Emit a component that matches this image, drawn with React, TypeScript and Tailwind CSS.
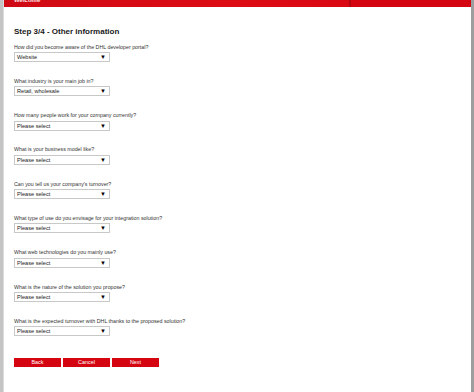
import React from "react";

const questions: { q: string; v: string }[] = [
  { q: "How did you become aware of the DHL developer portal?", v: "Website" },
  { q: "What industry is your main job in?", v: "Retail, wholesale" },
  { q: "How many people work for your company currently?", v: "Please select" },
  { q: "What is your business model like?", v: "Please select" },
  { q: "Can you tell us your company's turnover?", v: "Please select" },
  { q: "What type of use do you envisage for your integration solution?", v: "Please select" },
  { q: "What web technologies do you mainly use?", v: "Please select" },
  { q: "What is the nature of the solution you propose?", v: "Please select" },
  { q: "What is the expected turnover with DHL thanks to the proposed solution?", v: "Please select" },
];

export default function App() {
  return (
    <div
      className="w-[474px] h-[392px] overflow-hidden bg-white flex"
      style={{ fontFamily: '"Liberation Sans", Arial, sans-serif' }}
    >
      <div className="w-[4px] h-full bg-[#c4c4c4] border-r border-[#dadada]" />
      <div className="flex-1 flex flex-col">
        <div className="h-[7px] flex bg-gradient-to-r from-[#cf0a14] via-[#dd0b14] to-[#d40511]">
          <div className="w-[345px] h-full relative">
            <span className="absolute left-[10px] top-[-3px] text-[6px] leading-[7px] font-bold text-white/90">
              Welcome
            </span>
          </div>
          <div className="w-[2px] h-full bg-[#b3060e]" />
          <div className="flex-1 h-full bg-[#d40511]" />
        </div>
        <div className="pl-[10px] pt-[20px]">
          <div className="text-[8px] leading-[10px] font-bold text-[#1a1a1a] mb-[6.5px]">
            Step 3/4 - Other information
          </div>
          {questions.map((item, i) => (
            <div key={i} className="mb-[15.8px]">
              <div className="text-[5.3px] leading-[7px] text-[#333] mb-[1.5px]">{item.q}</div>
              <div className="w-[96px] h-[10px] border border-[#c8c8c8] bg-white flex items-center justify-between pl-[2px] pr-[3px]">
                <span className="text-[5.6px] leading-[8px] text-[#222]">{item.v}</span>
                <span className="text-[6px] leading-[8px] text-[#000]">▼</span>
              </div>
            </div>
          ))}
          <div className="flex gap-[2px] mt-[22px]">
            {["Back", "Cancel", "Next"].map((b) => (
              <div
                key={b}
                className="w-[47px] h-[9px] bg-[#d40511] text-white text-[5.4px] leading-[9px] text-center"
              >
                {b}
              </div>
            ))}
          </div>
        </div>
      </div>
      <div className="w-[3px] h-full bg-[#9e9e9e]" />
    </div>
  );
}
